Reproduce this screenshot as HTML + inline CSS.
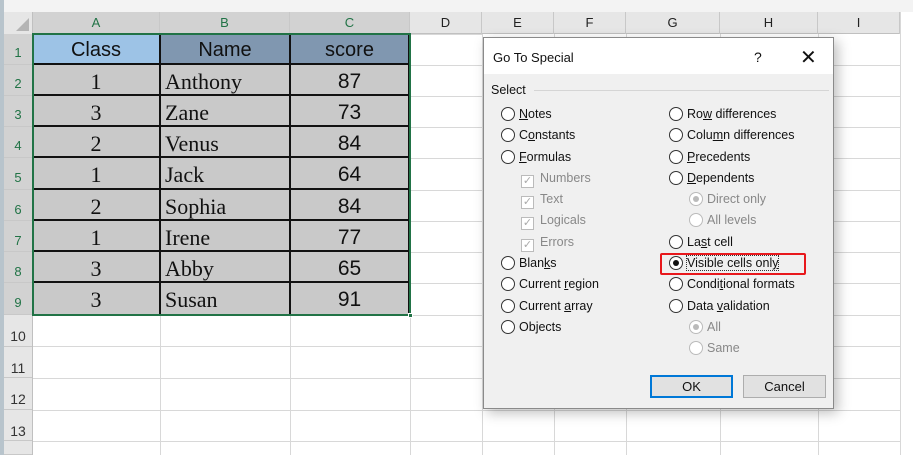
<!DOCTYPE html>
<html><head><meta charset="utf-8"><style>
*{margin:0;padding:0;box-sizing:border-box}
body{width:913px;height:455px;overflow:hidden;background:#fff;position:relative;font-family:"Liberation Sans",sans-serif}
.a{position:absolute}
.hl{position:absolute;height:1px;background:#d8d8d8}
.vl{position:absolute;width:1px;background:#d8d8d8}
.ch{position:absolute;top:12px;height:22px;font-size:13px;color:#222;text-align:center;line-height:22px;border-right:1px solid #c8c8c8}
.rh{position:absolute;left:4px;width:28px;font-size:13px;color:#333;text-align:center;border-bottom:1px solid #c8c8c8;background:#e6e6e6}
.cell{position:absolute;height:31px;line-height:33px;font-size:22px;color:#111;border-right:2px solid #111;border-bottom:2px solid #111;background:#c9c9c9}
.ser{font-family:"Liberation Serif",serif}
.sb{font-size:21px}
.dlg{position:absolute;left:483px;top:37px;width:351px;height:372px;background:#f0f0f0;border:1px solid #8a8a8a;box-shadow:4px 4px 12px rgba(0,0,0,.25);font-size:12.5px;color:#111}
.o{position:absolute;white-space:nowrap}
.r{display:inline-block;width:14px;height:14px;border:1px solid #333;border-radius:50%;background:#fff;vertical-align:-3px;margin-right:4px}
.rd{border-color:#bbb;position:relative}
.rd.on::after{content:"";position:absolute;left:3px;top:3px;width:6px;height:6px;border-radius:50%;background:#bbb}
.cb{display:inline-block;width:13px;height:13px;border:1px solid #bbb;background:#fff;vertical-align:-2px;margin-right:6px;color:#aaa;font-size:11px;line-height:11px;text-align:center}
.g{color:#888}
u{text-decoration:underline}
.btn{position:absolute;top:337px;width:83px;height:23px;border:1px solid #adadad;background:#e1e1e1;text-align:center;line-height:21px;font-size:13px}
</style></head><body>
<div class="a" style="left:0;top:0;width:913px;height:12px;background:#f3f3f3"></div>
<div class="a" style="left:0;top:0;width:4px;height:455px;background:#b8c4cc"></div>
<div class="a" style="left:4px;top:12px;width:896px;height:22px;background:#e6e6e6;border-bottom:1px solid #c0c0c0"></div>
<div class="a" style="left:4px;top:12px;width:29px;height:22px;background:#e6e6e6;border-right:1px solid #c0c0c0"></div>
<div class="a" style="left:16px;top:18px;width:0;height:0;border-left:13px solid transparent;border-bottom:13px solid #b4b4b4"></div>
<div class="ch" style="left:33px;width:127px;background:#d2d2d2;color:#217346">A</div>
<div class="ch" style="left:160px;width:130px;background:#d2d2d2;color:#217346">B</div>
<div class="ch" style="left:290px;width:120px;background:#d2d2d2;color:#217346">C</div>
<div class="ch" style="left:410px;width:72px">D</div>
<div class="ch" style="left:482px;width:72px">E</div>
<div class="ch" style="left:554px;width:72px">F</div>
<div class="ch" style="left:626px;width:94px">G</div>
<div class="ch" style="left:720px;width:98px">H</div>
<div class="ch" style="left:818px;width:82px">I</div>
<!-- row headers -->
<div class="rh" style="top:34px;height:31px;line-height:38px;background:#d2d2d2;color:#217346">1</div>
<div class="rh" style="top:65px;height:31px;line-height:38px;background:#d2d2d2;color:#217346">2</div>
<div class="rh" style="top:96px;height:31px;line-height:38px;background:#d2d2d2;color:#217346">3</div>
<div class="rh" style="top:127px;height:31px;line-height:38px;background:#d2d2d2;color:#217346">4</div>
<div class="rh" style="top:158px;height:32px;line-height:40px;background:#d2d2d2;color:#217346">5</div>
<div class="rh" style="top:190px;height:31px;line-height:40px;background:#d2d2d2;color:#217346">6</div>
<div class="rh" style="top:221px;height:31px;line-height:40px;background:#d2d2d2;color:#217346">7</div>
<div class="rh" style="top:252px;height:31px;line-height:40px;background:#d2d2d2;color:#217346">8</div>
<div class="rh" style="top:283px;height:32px;line-height:40px;background:#d2d2d2;color:#217346">9</div>
<div class="rh" style="top:315px;height:32px;line-height:42px;font-size:14px">10</div>
<div class="rh" style="top:347px;height:31px;line-height:42px;font-size:14px">11</div>
<div class="rh" style="top:378px;height:32px;line-height:42px;font-size:14px">12</div>
<div class="rh" style="top:410px;height:31px;line-height:42px;font-size:14px">13</div>
<div class="rh" style="top:441px;height:14px"></div>
<div class="a" style="left:32px;top:12px;width:1px;height:443px;background:#c0c0c0"></div>
<!-- gridlines -->
<div class="hl" style="left:410px;top:65px;width:73px"></div>
<div class="hl" style="left:410px;top:96px;width:73px"></div>
<div class="hl" style="left:410px;top:127px;width:73px"></div>
<div class="hl" style="left:410px;top:158px;width:73px"></div>
<div class="hl" style="left:410px;top:190px;width:73px"></div>
<div class="hl" style="left:410px;top:221px;width:73px"></div>
<div class="hl" style="left:410px;top:252px;width:73px"></div>
<div class="hl" style="left:410px;top:283px;width:73px"></div>
<div class="hl" style="left:33px;top:346px;width:867px"></div>
<div class="hl" style="left:33px;top:378px;width:867px"></div>
<div class="hl" style="left:33px;top:410px;width:867px"></div>
<div class="hl" style="left:33px;top:441px;width:867px"></div>
<div class="hl" style="left:833px;top:65px;width:67px"></div>
<div class="hl" style="left:833px;top:96px;width:67px"></div>
<div class="hl" style="left:833px;top:127px;width:67px"></div>
<div class="hl" style="left:833px;top:158px;width:67px"></div>
<div class="hl" style="left:833px;top:190px;width:67px"></div>
<div class="hl" style="left:833px;top:221px;width:67px"></div>
<div class="hl" style="left:833px;top:252px;width:67px"></div>
<div class="hl" style="left:833px;top:283px;width:67px"></div>
<div class="hl" style="left:833px;top:315px;width:67px"></div>
<div class="hl" style="left:410px;top:315px;width:73px"></div>
<div class="hl" style="left:410px;top:34px;width:73px;top:34px"></div>
<div class="vl" style="left:160px;top:315px;height:140px"></div>
<div class="vl" style="left:290px;top:315px;height:140px"></div>
<div class="vl" style="left:410px;top:315px;height:140px"></div>
<div class="vl" style="left:482px;top:34px;height:421px"></div>
<div class="vl" style="left:554px;top:34px;height:421px"></div>
<div class="vl" style="left:626px;top:34px;height:421px"></div>
<div class="vl" style="left:720px;top:34px;height:421px"></div>
<div class="vl" style="left:818px;top:34px;height:421px"></div>
<div class="vl" style="left:900px;top:12px;height:443px"></div>
<!-- data -->
<div class="cell" style="left:33px;top:34px;width:128px;background:#9dc3e6;text-align:center;font-size:20px">Class</div>
<div class="cell" style="left:161px;top:34px;width:130px;background:#8097b0;text-align:center;font-size:20px">Name</div>
<div class="cell" style="left:291px;top:34px;width:119px;background:#8097b0;text-align:center;font-size:20px">score</div>

<div class="cell ser" style="left:33px;top:65px;width:128px;text-align:center">1</div>
<div class="cell ser" style="left:161px;top:65px;width:130px;padding-left:4px">Anthony</div>
<div class="cell sb" style="left:291px;top:65px;width:119px;text-align:center">87</div>
<div class="cell ser" style="left:33px;top:96px;width:128px;text-align:center">3</div>
<div class="cell ser" style="left:161px;top:96px;width:130px;padding-left:4px">Zane</div>
<div class="cell sb" style="left:291px;top:96px;width:119px;text-align:center">73</div>
<div class="cell ser" style="left:33px;top:127px;width:128px;text-align:center">2</div>
<div class="cell ser" style="left:161px;top:127px;width:130px;padding-left:4px">Venus</div>
<div class="cell sb" style="left:291px;top:127px;width:119px;text-align:center">84</div>
<div class="cell ser" style="left:33px;top:158px;width:128px;height:32px;text-align:center">1</div>
<div class="cell ser" style="left:161px;top:158px;width:130px;height:32px;padding-left:4px">Jack</div>
<div class="cell sb" style="left:291px;top:158px;width:119px;height:32px;text-align:center">64</div>
<div class="cell ser" style="left:33px;top:190px;width:128px;text-align:center">2</div>
<div class="cell ser" style="left:161px;top:190px;width:130px;padding-left:4px">Sophia</div>
<div class="cell sb" style="left:291px;top:190px;width:119px;text-align:center">84</div>
<div class="cell ser" style="left:33px;top:221px;width:128px;text-align:center">1</div>
<div class="cell ser" style="left:161px;top:221px;width:130px;padding-left:4px">Irene</div>
<div class="cell sb" style="left:291px;top:221px;width:119px;text-align:center">77</div>
<div class="cell ser" style="left:33px;top:252px;width:128px;text-align:center">3</div>
<div class="cell ser" style="left:161px;top:252px;width:130px;padding-left:4px">Abby</div>
<div class="cell sb" style="left:291px;top:252px;width:119px;text-align:center">65</div>
<div class="cell ser" style="left:33px;top:283px;width:128px;text-align:center;border-bottom:none">3</div>
<div class="cell ser" style="left:161px;top:283px;width:130px;padding-left:4px;border-bottom:none">Susan</div>
<div class="cell sb" style="left:291px;top:283px;width:119px;text-align:center;border-bottom:none">91</div>
<div class="a" style="left:32px;top:33px;width:379px;height:283px;border:2px solid #217346"></div>
<div class="a" style="left:408px;top:313px;width:5px;height:5px;background:#217346;border:1px solid #fff"></div>
<!-- dialog -->
<div class="dlg">
<div class="a" style="left:0;top:0;width:349px;height:36px;background:#fff"></div>
<div class="o" style="left:9px;top:12px;font-size:13px">Go To Special</div>
<div class="o" style="left:270px;top:11px;font-size:14px">?</div>
<div class="o" style="left:316px;top:7px;font-size:20px;font-weight:300">✕</div>
<div class="o" style="left:7px;top:45px">Select</div>
<div class="a" style="left:50px;top:52px;width:295px;height:1px;background:#d5d5d5"></div>

<div class="o" style="left:17px;top:69px"><span class="r"></span><u>N</u>otes</div>
<div class="o" style="left:17px;top:90px"><span class="r"></span>C<u>o</u>nstants</div>
<div class="o" style="left:17px;top:112px"><span class="r"></span><u>F</u>ormulas</div>
<div class="o g" style="left:37px;top:133px"><span class="cb">✓</span>Numbers</div>
<div class="o g" style="left:37px;top:154px"><span class="cb">✓</span>Text</div>
<div class="o g" style="left:37px;top:175px"><span class="cb">✓</span>Logicals</div>
<div class="o g" style="left:37px;top:197px"><span class="cb">✓</span>Errors</div>
<div class="o" style="left:17px;top:218px"><span class="r"></span>Blan<u>k</u>s</div>
<div class="o" style="left:17px;top:239px"><span class="r"></span>Current <u>r</u>egion</div>
<div class="o" style="left:17px;top:261px"><span class="r"></span>Current <u>a</u>rray</div>
<div class="o" style="left:17px;top:282px"><span class="r"></span>Ob<u>j</u>ects</div>

<div class="o" style="left:185px;top:69px"><span class="r"></span>Ro<u>w</u> differences</div>
<div class="o" style="left:185px;top:90px"><span class="r"></span>Colu<u>m</u>n differences</div>
<div class="o" style="left:185px;top:112px"><span class="r"></span><u>P</u>recedents</div>
<div class="o" style="left:185px;top:133px"><span class="r"></span><u>D</u>ependents</div>
<div class="o g" style="left:205px;top:154px"><span class="r rd on"></span>Direct only</div>
<div class="o g" style="left:205px;top:175px"><span class="r rd"></span>All levels</div>
<div class="o" style="left:185px;top:197px"><span class="r"></span>La<u>s</u>t cell</div>
<div class="o" style="left:185px;top:218px"><span class="r" style="position:relative"><span style="position:absolute;left:3px;top:3px;width:6px;height:6px;border-radius:50%;background:#111"></span></span><span style="outline:1px dotted #333">Visible cells onl<u>y</u></span></div>
<div class="o" style="left:185px;top:239px"><span class="r"></span>Condi<u>t</u>ional formats</div>
<div class="o" style="left:185px;top:261px"><span class="r"></span>Data <u>v</u>alidation</div>
<div class="o g" style="left:205px;top:282px"><span class="r rd on"></span>All</div>
<div class="o g" style="left:205px;top:303px"><span class="r rd"></span>Same</div>
<div class="a" style="left:176px;top:215px;width:146px;height:22px;border:2px solid #e8181c;border-radius:2px"></div>

<div class="btn" style="left:166px;border:2px solid #0078d7;line-height:19px">OK</div>
<div class="btn" style="left:259px">Cancel</div>
</div>
</body></html>
